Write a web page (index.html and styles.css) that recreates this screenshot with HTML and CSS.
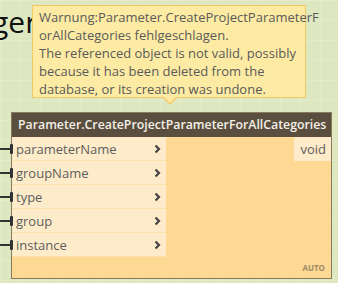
FILE: index.html
```html
<!DOCTYPE html>
<html>
<head>
    <meta charset="utf-8">
    <link rel="stylesheet" href="styles.css">
</head>
<body>
    <div class="workspace">
      <div class="group-title">ger</div>

      <div class="tooltip">
        Warnung:Parameter.CreateProjectParameterF<br>
        orAllCategories fehlgeschlagen.<br>
        The referenced object is not valid, possibly<br>
        because it has been deleted from the<br>
        database, or its creation was undone.
      </div>

      <div class="node">
        <div class="node-header">Parameter.CreateProjectParameterForAllCategories</div>
        <div class="node-body">
          <div class="inputs">
            <div class="port"><span class="wire"></span><span class="name">parameterName</span><svg class="chev" width="7" height="10" viewBox="0 0 7 10"><polyline points="1.5,1.5 5,5 1.5,8.5"/></svg></div>
            <div class="port"><span class="wire"></span><span class="name">groupName</span><svg class="chev" width="7" height="10" viewBox="0 0 7 10"><polyline points="1.5,1.5 5,5 1.5,8.5"/></svg></div>
            <div class="port"><span class="wire"></span><span class="name">type</span><svg class="chev" width="7" height="10" viewBox="0 0 7 10"><polyline points="1.5,1.5 5,5 1.5,8.5"/></svg></div>
            <div class="port"><span class="wire"></span><span class="name">group</span><svg class="chev" width="7" height="10" viewBox="0 0 7 10"><polyline points="1.5,1.5 5,5 1.5,8.5"/></svg></div>
            <div class="port"><span class="wire"></span><span class="name">instance</span><svg class="chev" width="7" height="10" viewBox="0 0 7 10"><polyline points="1.5,1.5 5,5 1.5,8.5"/></svg></div>
          </div>
          <div class="outputs">
            <div class="out">void</div>
          </div>
        </div>
        <div class="node-footer">AUTO</div>
      </div>
    </div>
</body>
</html>
```

FILE: styles.css
```css
* {
margin: 0;
padding: 0;
box-sizing: border-box;
}

body {
width: 338px;
height: 283px;
overflow: hidden;
background-color: #dee8c0;
font-family: "Open Sans", sans-serif;
}

.workspace {
position: relative;
width: 338px;
height: 283px;
overflow: hidden;
background-image:
    linear-gradient(rgba(255, 255, 255, 0.15) 1px, transparent 1px),
    linear-gradient(90deg, rgba(255, 255, 255, 0.15) 1px, transparent 1px);
background-size: 20px 20px;
}

/* big group label, cut at the left edge */
.group-title {
position: absolute;
left: -8px;
top: 7px;
font-size: 30px;
line-height: 30px;
color: #111111;
}

.tooltip {
position: absolute;
left: 32px;
top: 5px;
width: 274px;
height: 93px;
padding: 2px 0 0 6px;
background-color: #fdeba4;
border: 1px solid #f3c966;
color: #5a5a5a;
font-size: 13px;
line-height: 18px;
}

/* little arrow under the tooltip */
.tooltip::before,
.tooltip::after {
position: absolute;
left: 130px;
width: 0;
height: 0;
border-left: 7px solid transparent;
border-right: 7px solid transparent;
content: '';
}

.tooltip::before {
bottom: -8px;
border-top: 7px solid #f3c966;
}

.tooltip::after {
bottom: -6px;
border-top: 6px solid #fdeba4;
left: 131px;
border-left-width: 6px;
border-right-width: 6px;
}

.node {
position: absolute;
left: 11px;
top: 112px;
width: 321px;
height: 167px;
display: flex;
flex-direction: column;
background-color: #fdd993;
border: 1px solid #8a7a5c;
}

.node-header {
height: 24px;
padding: 0 6px;
background-color: #5a4e3e;
color: #f4f0e8;
font-size: 12.3px;
font-weight: 600;
line-height: 24px;
white-space: nowrap;
}

.node-body {
flex: 1;
display: flex;
justify-content: space-between;
}

.inputs {
width: 154px;
display: flex;
flex-direction: column;
}

.port {
position: relative;
height: 24px;
display: flex;
align-items: center;
justify-content: space-between;
padding: 0 5px 0 4px;
background-color: #fdebc9;
border-bottom: 1px solid #fde1a8;
color: #5e5e5e;
font-size: 13px;
}

.wire {
position: absolute;
left: -12px;
top: 11px;
width: 11px;
height: 2px;
background-color: #333333;
}

.wire::after {
position: absolute;
right: -2px;
top: -4px;
width: 3px;
height: 10px;
background-color: #333333;
border-radius: 1px;
content: '';
}

.chev polyline {
fill: none;
stroke: #444444;
stroke-width: 2.2;
}

.outputs {
display: flex;
flex-direction: column;
}

.out {
height: 24px;
padding: 0 5px 0 6px;
background-color: #fdebc9;
color: #5e5e5e;
font-size: 13px;
line-height: 24px;
}

.node-footer {
height: 22px;
padding: 0 6px;
text-align: right;
color: #a08a66;
font-size: 8px;
font-weight: 700;
line-height: 22px;
}
```
